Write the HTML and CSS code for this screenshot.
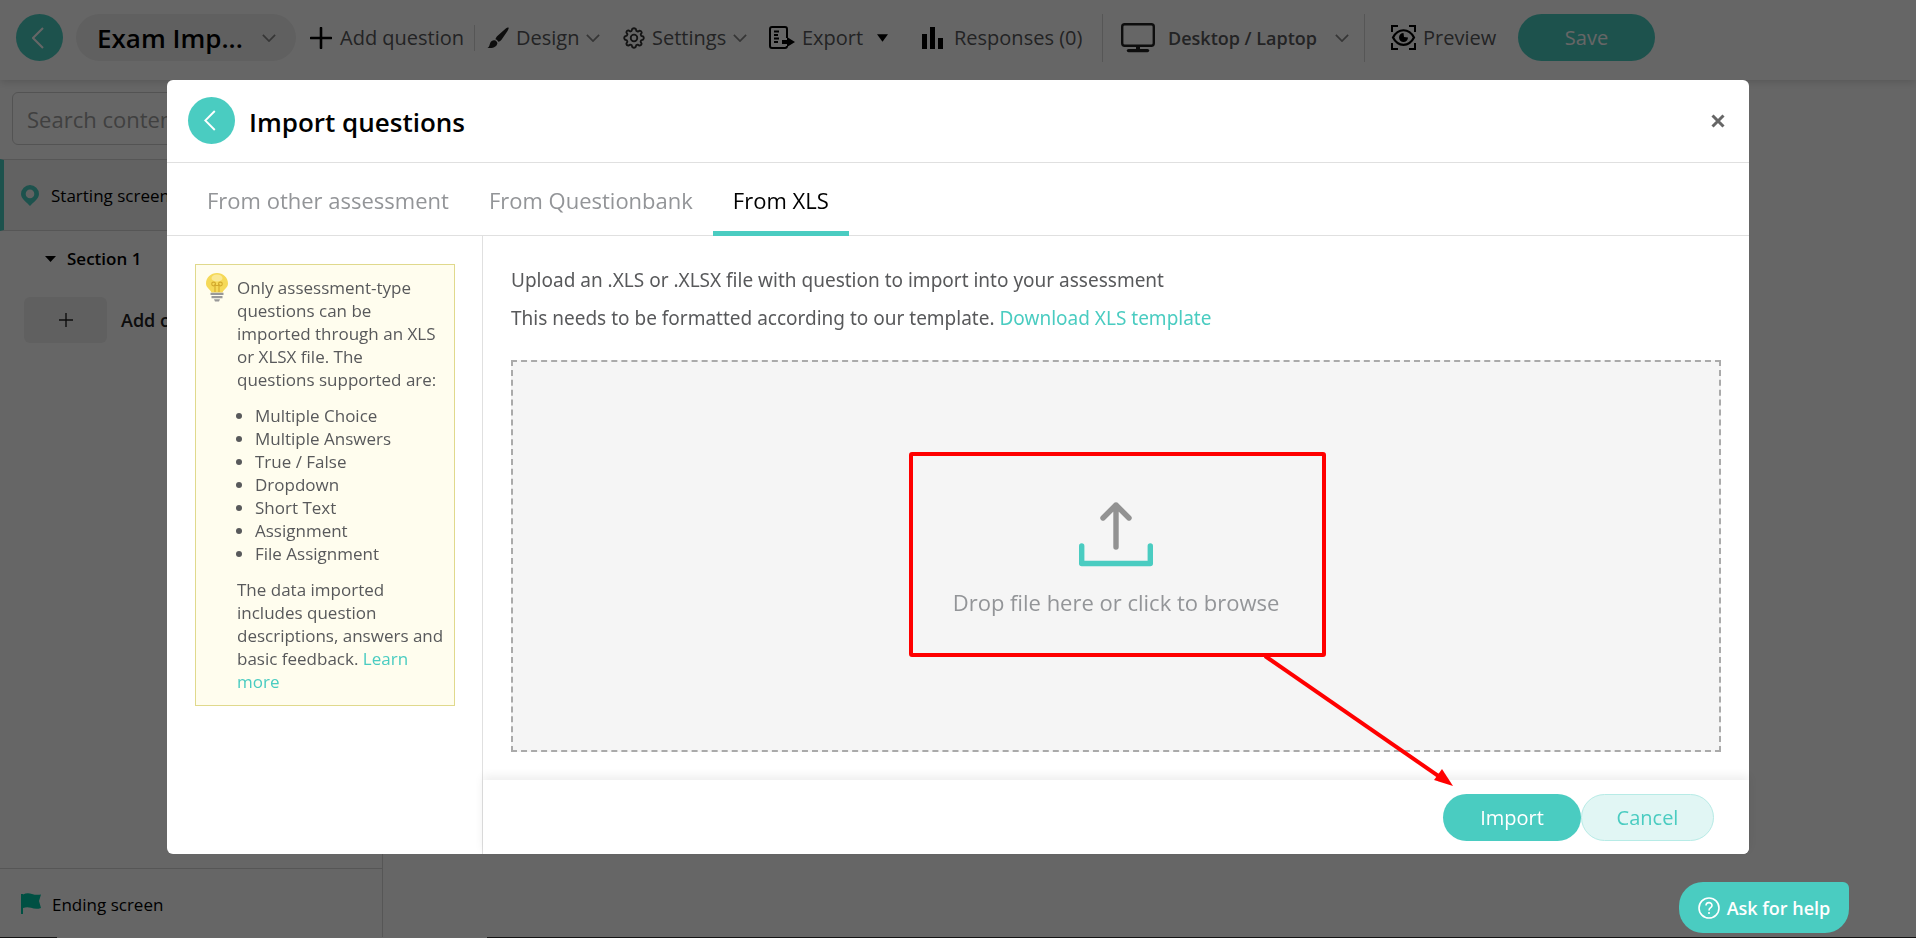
FILE: index.html
```html
<!DOCTYPE html>
<html lang="en">
<head>
    <meta charset="UTF-8">
    <meta name="viewport" content="width=device-width, initial-scale=1.0">
    <title>Import questions</title>
    <link rel="stylesheet" href="styles.css">
</head>
<body>

<!-- Editor behind the dialog -->
<div class="editor">
    <header class="toolbar">
        <button type="button" class="back" aria-label="Back">
            <svg width="12" height="22" viewBox="0 0 12 22"><path d="M11 1 L1 11 L11 21" /></svg>
        </button>
        <button type="button" class="title-pill">
            <span>Exam Imp...</span>
            <svg class="chevron" width="14" height="8" viewBox="0 0 16 9"><path d="M1 1 L8 8 L15 1" /></svg>
        </button>
        <button type="button" class="tool add">
            <svg width="22" height="22" viewBox="0 0 22 22"><path d="M11 1 V21 M1 11 H21" stroke="#000" stroke-width="2.6" stroke-linecap="round" /></svg>
            Add question
        </button>
        <span class="divider short"></span>
        <button type="button" class="tool design">
            <svg width="22" height="22" viewBox="0 0 22 22" fill="#222"><path d="M21.500 .6 C22 1.200 21.500 2.500 20.500 4 L14.500 12.700 C13.500 14 12.500 14.600 11.300 14.700 C10.500 13.500 9.500 12.600 8.400 12.300 C8.700 11 9.500 9.700 10.600 8.700 L18.800 1.600 C20 .5 21 .1 21.500 .6 Z" /><path d="M7.400 13.200 C9 13.500 10 14.500 10.400 16 C10.200 19.500 6 21.800 .5 20.800 C2.500 19.800 2.300 18.300 3.200 16 C4 14 5.700 13 7.400 13.200 Z" /></svg>
            Design
            <svg class="chevron" width="14" height="8" viewBox="0 0 16 9"><path d="M1 1 L8 8 L15 1" /></svg>
        </button>
        <button type="button" class="tool settings">
            <svg width="22" height="24" viewBox="0 0 24 24" fill="none" stroke="#333" stroke-width="2" stroke-linejoin="round"><circle cx="12" cy="12" r="3.600" /><path d="M10 2.200 Q12 .6 14 2.200 L14.600 4.300 L16.200 5 L18.300 3.900 Q20.400 4.200 20.500 6.200 L19.300 8 L19.800 9.600 L21.900 10.300 Q23.400 12 21.900 13.900 L19.800 14.500 L19.200 16.100 L20.300 18.200 Q20 20.300 17.900 20.300 L16 19.200 L14.500 19.800 L13.800 21.900 Q12 23.400 10.100 21.900 L9.500 19.800 L7.900 19.200 L5.900 20.300 Q3.700 20.100 3.700 18 L4.800 16.100 L4.200 14.500 L2.100 13.800 Q.6 12 2.100 10.200 L4.200 9.500 L4.900 7.900 L3.700 6 Q3.900 3.800 6 3.700 L7.900 4.900 L9.400 4.200 Z" /></svg>
            Settings
            <svg class="chevron" width="14" height="8" viewBox="0 0 16 9"><path d="M1 1 L8 8 L15 1" /></svg>
        </button>
        <button type="button" class="tool export">
            <svg width="26" height="23" viewBox="0 0 26 23" fill="none" stroke="#000" stroke-width="2"><path d="M18 12 V3 Q18 1 16 1 H3 Q1 1 1 3 V20 Q1 22 3 22 H16 Q18 22 18 20" /><path d="M5 5.500 H10 M5 9 H9 M5 12.500 H10 M5 16 H9" stroke-width="1.800" /><path d="M13 14 H18 V11 L26 16 L18 21 V18 H13 Z" fill="#000" stroke="none" /></svg>
            Export
            <svg class="caret" width="11" height="8" viewBox="0 0 12 8"><path d="M0 0 H12 L6 8 Z" /></svg>
        </button>
        <button type="button" class="tool responses">
            <svg width="22" height="22" viewBox="0 0 22 22"><path d="M0 7 H5 V22 H0 Z M8 0 H13 V22 H8 Z M16 11 H21 V22 H16 Z" /></svg>
            Responses (0)
        </button>
        <span class="divider"></span>
        <button type="button" class="tool device">
            <svg width="34" height="30" viewBox="0 0 34 30" fill="none" stroke="#222" stroke-width="2.400"><rect x="1.200" y="1.200" width="31.600" height="21.600" rx="2.500" /><path d="M17 23 V27" stroke-width="4" /><path d="M7.500 27.600 H26.500" stroke-width="3.400" stroke-linecap="round" /></svg>
            <span>Desktop / Laptop</span>
            <svg class="chevron" width="14" height="8" viewBox="0 0 16 9"><path d="M1 1 L8 8 L15 1" /></svg>
        </button>
        <span class="divider"></span>
        <button type="button" class="tool preview">
            <svg width="25" height="25" viewBox="0 0 25 25" fill="none" stroke="#000" stroke-width="2"><path d="M1 7 V1 H7 M18 1 H24 V7 M24 18 V24 H18 M7 24 H1 V18" /><path d="M2 12.500 C7 2.800 18 2.800 23 12.500 C18 22.200 7 22.200 2 12.500 Z" stroke-width="2.200" /><path d="M12.500 8 A4.500 4.500 0 1 0 17 12.500 L13 12 Z" fill="#000" stroke="none" /></svg>
            Preview
        </button>
        <button type="button" class="btn save">Save</button>
    </header>

    <aside class="sidebar">
        <div class="search">
            <input type="text" placeholder="Search content" aria-label="Search content">
        </div>
        <div class="screen active">
            <svg width="18" height="21" viewBox="0 0 18 21" fill="#4accc1"><path fill-rule="evenodd" d="M9 0 A9 9 0 0 1 18 9 C18 14 12 17.500 9 21 C6 17.500 0 14 0 9 A9 9 0 0 1 9 0 Z M9 4.600 A4.300 4.300 0 1 0 9 13.200 A4.300 4.300 0 1 0 9 4.600 Z" /></svg>
            Starting screen
        </div>
        <div class="section">
            <svg width="11" height="6" viewBox="0 0 11 6"><path d="M0 0 H11 L5.500 6 Z" /></svg>
            Section 1
        </div>
        <div class="add-row">
            <button type="button" class="add-box" aria-label="Add content">
                <svg width="14" height="14" viewBox="0 0 14 14"><path d="M7 0 V14 M0 7 H14" stroke="#222" stroke-width="1.400" /></svg>
            </button>
            Add content
        </div>
        <div class="screen ending">
            <svg width="22" height="22" viewBox="0 0 22 22" fill="#00c9a7"><path d="M1 1 H3 V21 H1 Z M3 1.500 C6 0 9 0 12 1 C15 2 18 2 21 1.500 L19 8 L21 15 C17 16.500 14 15.800 11 14.800 C8 14 6 14 3 15 Z" /></svg>
            Ending screen
        </div>
    </aside>
    <div class="strip"></div>
</div>

<!-- Import dialog -->
<div class="overlay">
    <div class="modal" role="dialog" aria-labelledby="modalTitle">
        <div class="modal-header">
            <button type="button" class="back" aria-label="Back">
                <svg width="12" height="21" viewBox="0 0 12 22"><path d="M11 1 L1 11 L11 21" /></svg>
            </button>
            <h2 id="modalTitle">Import questions</h2>
            <button type="button" class="close" aria-label="Close">
                <svg width="14" height="14" viewBox="0 0 14 14"><path d="M1.500 1.500 L12.500 12.500 M12.500 1.500 L1.500 12.500" /></svg>
            </button>
        </div>

        <nav class="tabs">
            <a href="#other">From other assessment</a>
            <a href="#bank">From Questionbank</a>
            <a href="#xls" class="current">From XLS</a>
        </nav>

        <div class="modal-body">
            <div class="info">
                <div class="note">
                    <svg class="bulb" width="22" height="29" viewBox="0 0 22 29"><path d="M11 0 C17 0 22 4.400 22 10.400 C22 14.500 18 16 16.500 19.500 H5.500 C4 16 0 14.500 0 10.400 C0 4.400 5 0 11 0 Z" fill="#f5d957" /><ellipse cx="11" cy="5" rx="5.500" ry="3.600" fill="#fae894" /><path d="M9 19 V11 M13 19 V11 M9 12.500 H13" fill="none" stroke="#d3a92d" stroke-width="1.100" /><circle cx="7.600" cy="11" r="1.900" fill="none" stroke="#d3a92d" stroke-width="1.100" /><circle cx="14.400" cy="11" r="1.900" fill="none" stroke="#d3a92d" stroke-width="1.100" /><path d="M4.500 19.800 H17.500 V22 H4.500 Z M5.500 23 H16.500 V25.300 H5.500 Z M8 26.300 H14 L13 28.600 H9 Z" fill="#999" /></svg>
                    <div class="note-text">
                        <p>Only assessment-type questions can be imported through an XLS or XLSX file. The questions supported are:</p>
                        <ul>
                            <li>Multiple Choice</li>
                            <li>Multiple Answers</li>
                            <li>True / False</li>
                            <li>Dropdown</li>
                            <li>Short Text</li>
                            <li>Assignment</li>
                            <li>File Assignment</li>
                        </ul>
                        <p>The data imported includes question descriptions, answers and basic feedback. <a href="#learn">Learn more</a></p>
                    </div>
                </div>
            </div>

            <div class="main">
                <div class="upload">
                    <p>Upload an .XLS or .XLSX file with question to import into your assessment</p>
                    <p>This needs to be formatted according to our template. <a href="#template">Download XLS template</a></p>
                    <div class="dropzone">
                        <button type="button" class="browse">
                            <svg width="74" height="65" viewBox="0 0 74 65" fill="none" stroke-width="5.400" stroke-linecap="round" stroke-linejoin="round"><path d="M37 3 V45 M24 16 L37 3 L50 16" stroke="#929292" /><path d="M2.700 44 V61.500 H71.300 V44" stroke="#4accc1" /></svg>
                            Drop file here or click to browse
                        </button>
                        <svg class="callout" width="546" height="338" viewBox="0 0 546 338"><rect x="2" y="2" width="413" height="201" rx="1" fill="none" stroke="#f00" stroke-width="4" /><path d="M356 204 L531 325" stroke="#f00" stroke-width="4" /><path d="M544 334 L525 328 L533 317 Z" fill="#f00" /></svg>
                    </div>
                </div>
                <div class="actions">
                    <button type="button" class="btn import">Import</button>
                    <button type="button" class="btn cancel">Cancel</button>
                </div>
            </div>
        </div>
    </div>
</div>

<button type="button" class="help">
    <svg width="22" height="22" viewBox="0 0 22 22" fill="none" stroke="#fff" stroke-width="1.600"><circle cx="11" cy="11" r="10" /><path d="M8 8.600 C8 4.600 14 4.600 14 8.500 C14 10.800 11 10.600 11 13.400 M11 15 V17" /></svg>
    Ask for help
</button>

</body>
</html>
```
FILE: styles.css
```css
* {
    margin: 0;
    padding: 0;
    box-sizing: border-box;
}
body {
    font-family: "Open Sans", "Noto Sans", sans-serif;
    font-size: 19px;
    color: #58595b;
    background-color: white;
}
button {
    font: inherit;
    color: inherit;
    border: none;
    background: none;
    cursor: pointer;
}
svg {
    flex-shrink: 0;
}
a {
    color: #4accc1;
    text-decoration: none;
}

/* Editor */
.editor {
    height: 100vh;
    display: flex;
    flex-direction: column;
    overflow: hidden;
}
.toolbar {
    height: 80px;
    flex-shrink: 0;
    display: flex;
    align-items: center;
    padding: 0 16px 5px;
    box-shadow: 0 2px 8px rgba(0, 0, 0, 0.15);
    white-space: nowrap;
}
.back {
    width: 47px;
    height: 47px;
    flex-shrink: 0;
    display: flex;
    align-items: center;
    justify-content: center;
    padding-right: 4px;
    border-radius: 50%;
    background-color: #4accc1;
}
.back path {
    fill: none;
    stroke: white;
    stroke-width: 2;
}
.title-pill {
    width: 220px;
    height: 47px;
    margin-left: 13px;
    padding: 0 20px 0 21px;
    display: flex;
    align-items: center;
    justify-content: space-between;
    border-radius: 24px;
    background-color: #f0f0f0;
    color: #000;
    font-size: 26px;
    font-weight: 600;
}
.chevron path {
    fill: none;
    stroke: #888;
    stroke-width: 2;
}
.tool {
    display: flex;
    align-items: center;
    gap: 8px;
    font-size: 20px;
}
.add {
    width: 164px;
    margin-left: 14px;
}
.design {
    width: 136px;
    margin-left: 12px;
}
.settings {
    width: 146px;
}
.settings, .design {
    gap: 7px;
}
.export {
    width: 153px;
    gap: 7px;
}
.caret {
    margin-left: 7px;
}
.responses {
    width: 180px;
    gap: 10px;
}
.divider {
    width: 1px;
    height: 48px;
    background-color: #d8d8d8;
}
.short {
    height: 26px;
}
.device {
    width: 261px;
    padding-left: 18px;
    gap: 13px;
    font-size: 18px;
    font-weight: 600;
}
.device .chevron {
    margin-left: 5px;
}
.preview {
    width: 153px;
    padding-left: 26px;
    gap: 7px;
}
.btn {
    height: 47px;
    border-radius: 24px;
    background-color: #4accc1;
    color: white;
    font-size: 20px;
}
.save {
    width: 137px;
}

/* Sidebar */
.sidebar {
    width: 383px;
    flex: 1;
    display: flex;
    flex-direction: column;
    border-right: 1px solid #d8d8d8;
    color: #000;
    font-size: 17px;
}
.search {
    padding: 12px;
}
.search input {
    width: 100%;
    height: 53px;
    padding: 0 14px;
    border: 1px solid #d0d0d0;
    border-radius: 6px;
    font: inherit;
    font-size: 22px;
}
.search input::placeholder {
    color: #a0a0a0;
}
.screen {
    height: 72px;
    display: flex;
    align-items: center;
    gap: 12px;
    padding-left: 21px;
    border-top: 1px solid #d8d8d8;
}
.active {
    margin-top: 2px;
    padding-left: 17px;
    border-left: 4px solid #4accc1;
    border-bottom: 1px solid #d8d8d8;
    background-color: #f5f5f5;
}
.section {
    display: flex;
    align-items: center;
    gap: 11px;
    padding: 16px 0 0 45px;
    font-weight: 600;
}
.add-row {
    display: flex;
    align-items: center;
    gap: 14px;
    padding: 27px 0 0 24px;
    color: #222;
    font-size: 18px;
    font-weight: 600;
}
.add-box {
    width: 83px;
    height: 46px;
    border-radius: 6px;
    background-color: #f0f0f0;
}
.ending {
    height: 69px;
    margin-top: auto;
    gap: 10px;
    padding: 2px 0 0 20px;
}
.strip {
    height: 1px;
    background: linear-gradient(to right, #333 57px, #fff 57px, #fff 487px, #333 487px);
}

/* Dialog */
.overlay {
    position: fixed;
    inset: 0;
    display: flex;
    padding: 80px 167px 84px;
    background-color: rgba(0, 0, 0, 0.6);
}
.modal {
    flex: 1;
    display: flex;
    flex-direction: column;
    border-radius: 6px;
    background-color: white;
}
.modal-header {
    height: 83px;
    display: flex;
    align-items: center;
    gap: 14px;
    padding: 0 24px 1px 21px;
    border-bottom: 1px solid #e0e0e0;
}
.modal-header h2 {
    padding-top: 2px;
    color: #000;
    font-size: 26px;
    font-weight: 600;
}
.close {
    margin-left: auto;
}
.close path {
    stroke: #666;
    stroke-width: 3;
}
.tabs {
    height: 73px;
    display: flex;
    padding-left: 20px;
    border-bottom: 1px solid #e0e0e0;
}
.tabs a {
    height: 73px;
    padding: 0 20px;
    line-height: 74px;
    border-bottom: 5px solid transparent;
    color: #939598;
    font-size: 22px;
}
.tabs .current {
    color: #000;
    border-bottom-color: #4accc1;
}
.modal-body {
    flex: 1;
    display: flex;
}
.info {
    width: 316px;
    padding: 28px;
    border-right: 1px solid #e0e0e0;
}
.note {
    width: 260px;
    display: flex;
    gap: 9px;
    padding: 8px 10px 12px;
    border: 1px solid #e0d98c;
    background-color: #fffdee;
    font-size: 17px;
    line-height: 23px;
}
.note-text {
    padding-top: 3px;
}
.note ul {
    margin: 13px 0;
    padding-left: 18px;
}
.main {
    flex: 1;
    display: flex;
    flex-direction: column;
}
.upload {
    flex: 1;
    display: flex;
    flex-direction: column;
    padding: 25px 28px 28px;
    font-family: "Noto Sans", "Open Sans", sans-serif;
    line-height: 38px;
}
.dropzone {
    position: relative;
    flex: 1;
    display: flex;
    margin-top: 23px;
    border: 2px dashed #aaa;
    background-color: #f5f5f5;
    font-family: "Open Sans", "Noto Sans", sans-serif;
}
.browse {
    flex: 1;
    display: flex;
    flex-direction: column;
    align-items: center;
    justify-content: center;
    gap: 16px;
    padding-top: 10px;
    color: #939598;
    font-size: 22px;
}
.callout {
    position: absolute;
    z-index: 1;
    left: calc(50% - 207px);
    top: calc(50% - 104px);
    pointer-events: none;
}
.actions {
    height: 74px;
    display: flex;
    align-items: center;
    justify-content: flex-end;
    padding-right: 35px;
    border-radius: 0 0 6px 0;
    box-shadow: 0 -4px 10px rgba(0, 0, 0, 0.07);
    background-color: white;
}
.import {
    width: 138px;
}
.cancel {
    width: 133px;
    border: 1px solid #b7ebe6;
    background-color: #e1f6f4;
    color: #4accc1;
}
.help {
    position: fixed;
    right: 67px;
    bottom: 5px;
    width: 170px;
    height: 51px;
    display: flex;
    align-items: center;
    justify-content: center;
    gap: 7px;
    border-radius: 24px 6px 24px 24px;
    background-color: #4accc1;
    color: white;
    font-size: 18px;
    font-weight: 600;
}
```
